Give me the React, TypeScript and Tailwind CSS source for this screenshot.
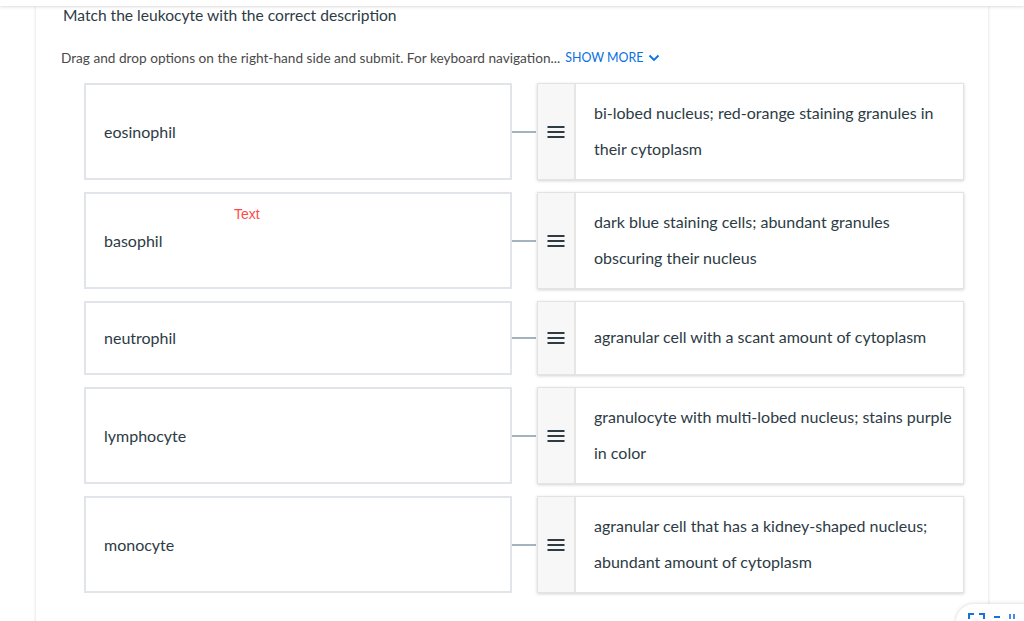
import React from "react";

type Row = { left: string; right: string[]; h: number };

const rows: Row[] = [
  { left: "eosinophil", right: ["bi-lobed nucleus; red-orange staining granules in", "their cytoplasm"], h: 97 },
  { left: "basophil", right: ["dark blue staining cells; abundant granules", "obscuring their nucleus"], h: 97 },
  { left: "neutrophil", right: ["agranular cell with a scant amount of cytoplasm"], h: 74 },
  { left: "lymphocyte", right: ["granulocyte with multi-lobed nucleus; stains purple", "in color"], h: 97 },
  { left: "monocyte", right: ["agranular cell that has a kidney-shaped nucleus;", "abundant amount of cytoplasm"], h: 97 },
];

function Handle() {
  return (
    <svg width="18" height="14" viewBox="0 0 18 14" className="block">
      <rect x="0.5" y="1" width="17" height="2" fill="#2d3b45" />
      <rect x="0.5" y="6" width="17" height="2" fill="#2d3b45" />
      <rect x="0.5" y="11" width="17" height="2" fill="#2d3b45" />
    </svg>
  );
}

export default function App() {
  return (
    <div
      className="relative w-[1024px] h-[621px] overflow-hidden bg-white text-[#2d3b45]"
      style={{ fontFamily: "Lato, 'Noto Sans', sans-serif" }}
    >
      <div className="relative z-10 h-[6px] w-full bg-white shadow-[0_1px_3px_rgba(0,0,0,0.14)]" />
      <div className="ml-[36px] w-[952px] h-[640px] bg-white shadow-[0_0_3px_rgba(0,0,0,0.16)]">
        <div className="pl-[27px] text-[15.6px] leading-[18px] text-[#2d3b45]">
          Match the leukocyte with the correct description
        </div>
        <div className="pl-[25px] mt-[25px] flex items-center text-[13.65px] leading-[18px] text-[#4a4a4a]">
          <span>Drag and drop options on the right-hand side and submit. For keyboard navigation...</span>
          <span className="ml-[5px] text-[12.4px] text-[#0770e3] flex items-center">
            SHOW MORE
            <svg width="12" height="8" viewBox="0 0 12 8" className="ml-[5px]">
              <path d="M1.5 1.5 L6 6 L10.5 1.5" stroke="#0770e3" strokeWidth="1.8" fill="none" />
            </svg>
          </span>
        </div>
        <div className="mt-[16px] ml-[48px] flex flex-col gap-[12px]">
          {rows.map((r, i) => (
            <div key={i} className="relative flex items-center" style={{ height: r.h }}>
              <div className="h-full w-[428px] border-2 border-[#e1e4e8] flex items-center pl-[18px] text-[16px]">
                {r.left}
              </div>
              <div className="w-[24px] h-[2px] bg-[#a5b3bf]" />
              <div className="h-full w-[427px] ml-[1px] flex border border-[#e3e3e3] shadow-[0_1px_3px_rgba(0,0,0,0.18)] bg-white">
                <div className="w-[38px] shrink-0 bg-[#f7f7f7] border-r-2 border-[#e6e6e6] flex items-center justify-center">
                  <Handle />
                </div>
                <div className="flex flex-col justify-center pl-[18px] pb-[2px] text-[16px] leading-[36px]">
                  {r.right.map((t, j) => (
                    <div key={j}>{t}</div>
                  ))}
                </div>
              </div>
              {i === 1 && (
                <span
                  className="absolute left-[150px] top-[12px] text-[14px] text-[#ff4a4a]"
                  style={{ fontFamily: "'Liberation Sans', Arial, sans-serif" }}
                >
                  Text
                </span>
              )}
            </div>
          ))}
        </div>
      </div>
      <div className="absolute left-[956px] top-[604px] w-[80px] h-[30px] bg-white rounded-tl-[18px] shadow-[0_0_4px_rgba(0,0,0,0.18)]">
        <svg width="70" height="20" viewBox="0 0 70 20" className="absolute left-[12px] top-[9px]">
          <path d="M1 6 V1 H6" stroke="#1a6fe0" strokeWidth="2" fill="none" />
          <path d="M11 1 H16 V6" stroke="#1a6fe0" strokeWidth="2" fill="none" />
          <path d="M26 4 H32" stroke="#1a6fe0" strokeWidth="2" fill="none" />
          <path d="M42 1 V6 M46 1 V6" stroke="#1a6fe0" strokeWidth="1.6" fill="none" />
        </svg>
      </div>
    </div>
  );
}
